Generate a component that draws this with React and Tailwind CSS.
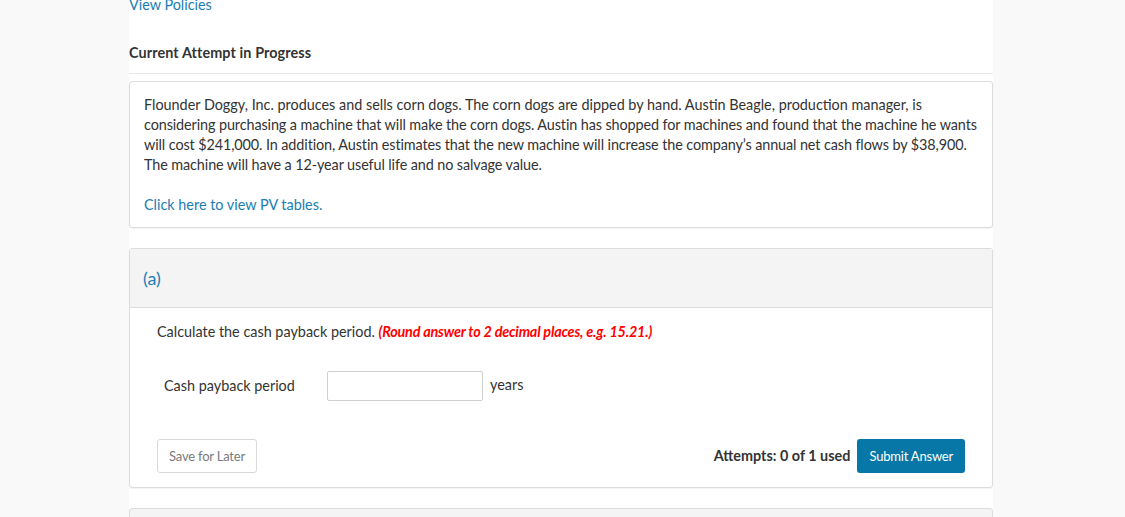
export default function App() {
  return (
    <div className="h-[517px] w-full overflow-hidden bg-[#f9f9f9] font-['Lato',sans-serif] text-[14.4px] leading-5 text-[#333]">
      <div className="ml-[129px] w-[864px] min-h-[517px] bg-white">
        {/* policies link */}
        <div className="-mt-[5px] h-5">
          <a href="#" className="text-[#1b7db3]">View Policies</a>
        </div>

        <div className="mt-[28px] border-b border-[#e6e6e6] pb-[10px] font-bold tracking-[0.1px] text-[#333]">
          Current Attempt in Progress
        </div>

        {/* question text */}
        <div className="mt-[7px] rounded-[3px] border border-[#dcdcdc] px-[14px] pt-[13px] pb-[12px] shadow-[0_1px_1px_rgba(0,0,0,0.05)]">
          <p className="whitespace-nowrap">
            <span>Flounder Doggy, Inc. produces and sells corn dogs. The corn dogs are dipped by hand. Austin Beagle, production manager, is</span>
            <br />
            <span className="tracking-[-0.1px]">considering purchasing a machine that will make the corn dogs. Austin has shopped for machines and found that the machine he wants</span>
            <br />
            <span className="tracking-[-0.1px]">will cost $241,000. In addition, Austin estimates that the new machine will increase the company’s annual net cash flows by $38,900.</span>
            <br />
            <span className="tracking-[-0.1px]">The machine will have a 12-year useful life and no salvage value.</span>
          </p>
          <p className="mt-5">
            <a href="#" className="text-[#1b7db3]">Click here to view PV tables.</a>
          </p>
        </div>

        {/* part (a) */}
        <div className="mt-5 rounded-[3px] border border-[#dcdcdc] shadow-[0_1px_1px_rgba(0,0,0,0.05)]">
          <div className="flex h-[59px] items-center border-b border-[#dcdcdc] bg-[#f4f4f4] px-[13px] text-[18px] text-[#1b7db3]">
            (a)
          </div>
          <div className="px-[27px] pt-[14px] pb-[14px]">
            <p>
              Calculate the cash payback period.{" "}
              <span className="font-bold italic tracking-[-0.2px] text-[#ff0000]">
                (Round answer to 2 decimal places, e.g. 15.21.)
              </span>
            </p>

            <div className="mt-[29px] flex items-center pl-[7px]">
              <span className="w-[163px]">Cash payback period</span>
              <input
                type="text"
                className="h-[30px] w-[156px] rounded-[2px] border border-[#cfcfcf] bg-white px-2 outline-none"
              />
              <span className="ml-[7px] -mt-[3px]">years</span>
            </div>

            <div className="mt-[38px] flex items-center justify-between">
              <button className="h-[34px] rounded-[3px] border border-[#d9d9d9] bg-white px-[11px] text-[13px] tracking-[-0.2px] text-[#7a7a7a]">
                Save for Later
              </button>
              <div className="flex items-center">
                <span className="mr-[7px] font-bold text-[#333]">Attempts: 0 of 1 used</span>
                <button className="h-[34px] rounded-[3px] bg-[#0677a7] px-[12px] text-[13px] tracking-[-0.2px] text-white">
                  Submit Answer
                </button>
              </div>
            </div>
          </div>
        </div>

        <div className="mt-[20px] h-[40px] rounded-t-[3px] border border-[#dcdcdc] bg-[#f4f4f4]"></div>
      </div>
    </div>
  );
}
